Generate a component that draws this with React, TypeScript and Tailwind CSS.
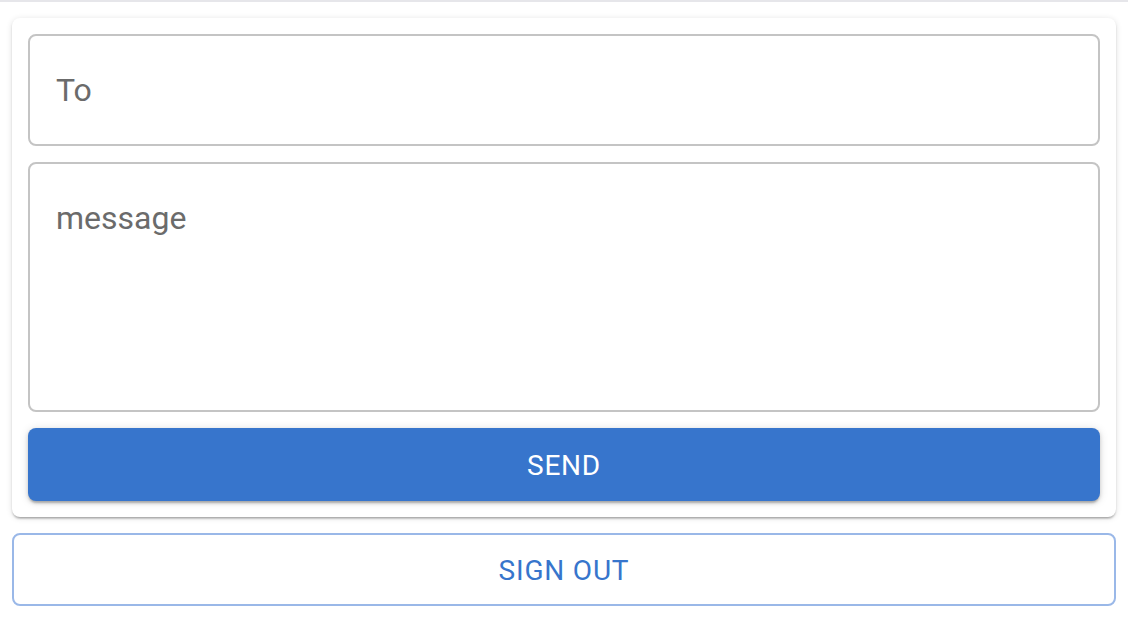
import React from "react";

export default function App() {
  return (
    <div className="min-h-screen bg-white border-t-2 border-[#e6e6ea] px-[12px] pt-[16px]" style={{ fontFamily: "Roboto, 'Liberation Sans', sans-serif" }}>
      <div className="bg-white rounded-[8px] p-[16px] flex flex-col gap-[16px] shadow-[0_2px_2px_rgba(0,0,0,0.14),0_1px_6px_rgba(0,0,0,0.12),0_3px_2px_-2px_rgba(0,0,0,0.2)]">
        <div className="h-[112px] border-2 border-[#c4c4c4] rounded-[8px] pl-[26px] flex items-center">
          <span className="text-[32px] leading-[46px] text-[#6b6b6b]">To</span>
        </div>
        <div className="h-[250px] border-2 border-[#c4c4c4] rounded-[8px] pl-[26px] pt-[31px]">
          <span className="text-[32px] leading-[46px] text-[#6b6b6b]">message</span>
        </div>
        <button className="h-[73px] w-full rounded-[8px] bg-[#3775cc] text-white text-[28px] uppercase tracking-[0.8px] font-normal pt-[2px] shadow-[0_3px_2px_-1px_rgba(0,0,0,0.2),0_2px_4px_rgba(0,0,0,0.14),0_1px_10px_rgba(0,0,0,0.12)]">
          Send
        </button>
      </div>
      <button className="mt-[16px] h-[73px] w-full rounded-[8px] border-2 border-[#9ab8e8] bg-white text-[#3775cc] text-[28px] uppercase tracking-[0.8px] font-normal pt-[2px]">
        Sign out
      </button>
    </div>
  );
}
